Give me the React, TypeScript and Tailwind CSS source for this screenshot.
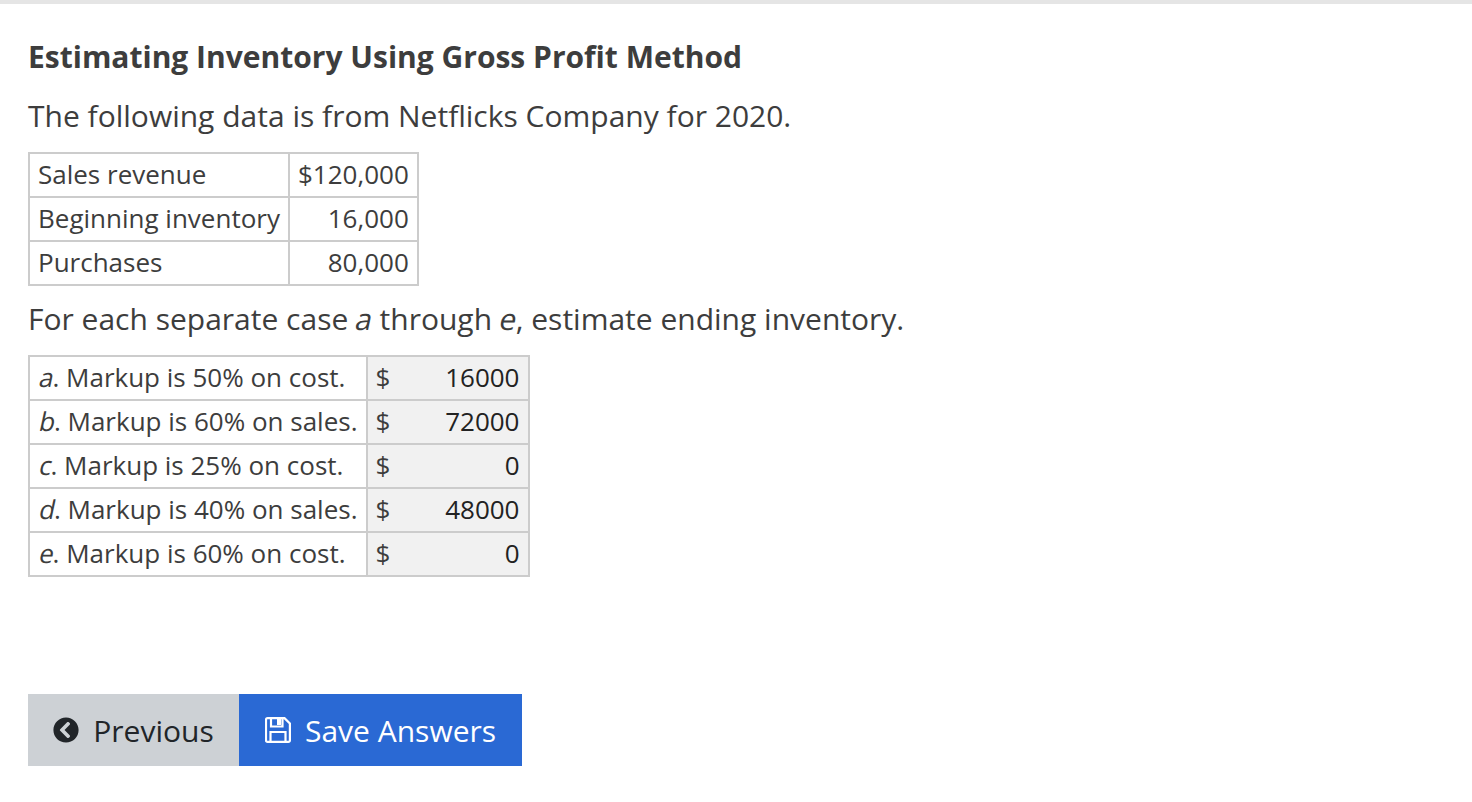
import { FaChevronCircleLeft } from "react-icons/fa";

const DATA = [
  { label: "Sales revenue", value: "$120,000" },
  { label: "Beginning inventory", value: "16,000" },
  { label: "Purchases", value: "80,000" },
];

const CASES = [
  { key: "a", text: "Markup is 50% on cost.", answer: "16000" },
  { key: "b", text: "Markup is 60% on sales.", answer: "72000" },
  { key: "c", text: "Markup is 25% on cost.", answer: "0" },
  { key: "d", text: "Markup is 40% on sales.", answer: "48000" },
  { key: "e", text: "Markup is 60% on cost.", answer: "0" },
];

// the reference slants the upright letter instead of using the italic face
function Slanted({ children, className }: { children: string; className: string }) {
  return <span className={`inline-block -skew-x-12 ${className}`}>{children}</span>;
}

function SaveIcon() {
  return (
    <svg viewBox="0 0 26 26" className="h-[26px] w-[26px]" fill="none" stroke="currentColor" strokeWidth="2.2">
      <path d="M2.500 1.100h17l5.400 5.400v16.900a1.500 1.500 0 0 1-1.500 1.500h-20.900a1.500 1.500 0 0 1-1.500-1.500v-20.800a1.500 1.500 0 0 1 1.500-1.500z" />
      <path d="M6 2v7.500h11.500v-7.500" />
      <path d="M12 2h4v6h-4z" fill="currentColor" stroke="none" />
      <path d="M5.500 24v-9h15v9" />
    </svg>
  );
}

export default function App() {
  return (
    <div className="min-h-[802px] bg-white font-['Open_Sans',sans-serif] text-[#3d3d3d]">
      <div className="h-1 bg-[#e5e5e5]" />
      <div className="px-7 pt-[31px]">
        <h1 className="text-[30px] leading-[44px] font-bold">Estimating Inventory Using Gross Profit Method</h1>
        <p className="mt-[15px] text-[30px] leading-[44px]">The following data is from Netflicks Company for 2020.</p>

        <table className="mt-[14px] border-collapse text-[26px] leading-[40px]">
          <tbody>
            {DATA.map((row) => (
              <tr key={row.label}>
                <td className="border-2 border-[#cccccc] px-2 pt-0 pb-[2px]">{row.label}</td>
                <td className="border-2 border-[#cccccc] px-2 pt-0 pb-[2px] text-right">{row.value}</td>
              </tr>
            ))}
          </tbody>
        </table>

        <p className="mt-[11px] text-[30px] leading-[44px]">
          For each separate case <Slanted className="-mr-[1px]">a</Slanted> through{" "}
          <Slanted className="-mr-[1px]">e</Slanted>, estimate ending inventory.
        </p>

        <table className="mt-[14px] border-collapse text-[26px] leading-[40px]">
          <tbody>
            {CASES.map((row) => (
              <tr key={row.key}>
                <td className="border-2 border-[#cccccc] pt-0 pr-2 pb-[2px] pl-2.5">
                  <Slanted className="-mr-[2px]">{row.key}</Slanted>. {row.text}
                </td>
                <td className="w-[162px] border-2 border-[#cccccc] bg-[#f1f1f1] pt-0 pr-2 pb-[2px] pl-2">
                  <div className="flex justify-between">
                    <span>$</span>
                    <span className="text-[#222222]">{row.answer}</span>
                  </div>
                </td>
              </tr>
            ))}
          </tbody>
        </table>

        <div className="mt-[117px] flex">
          <button className="flex h-[72px] w-[211px] items-center justify-center gap-[14px] bg-[#cdd1d5] text-[30px] text-[#212529]">
            <FaChevronCircleLeft className="h-[26px] w-[26px]" />
            Previous
          </button>
          <button className="flex h-[72px] w-[283px] items-center justify-center gap-[14px] bg-[#2a69d4] text-[30px] text-white">
            <SaveIcon />
            Save Answers
          </button>
        </div>
      </div>
    </div>
  );
}
